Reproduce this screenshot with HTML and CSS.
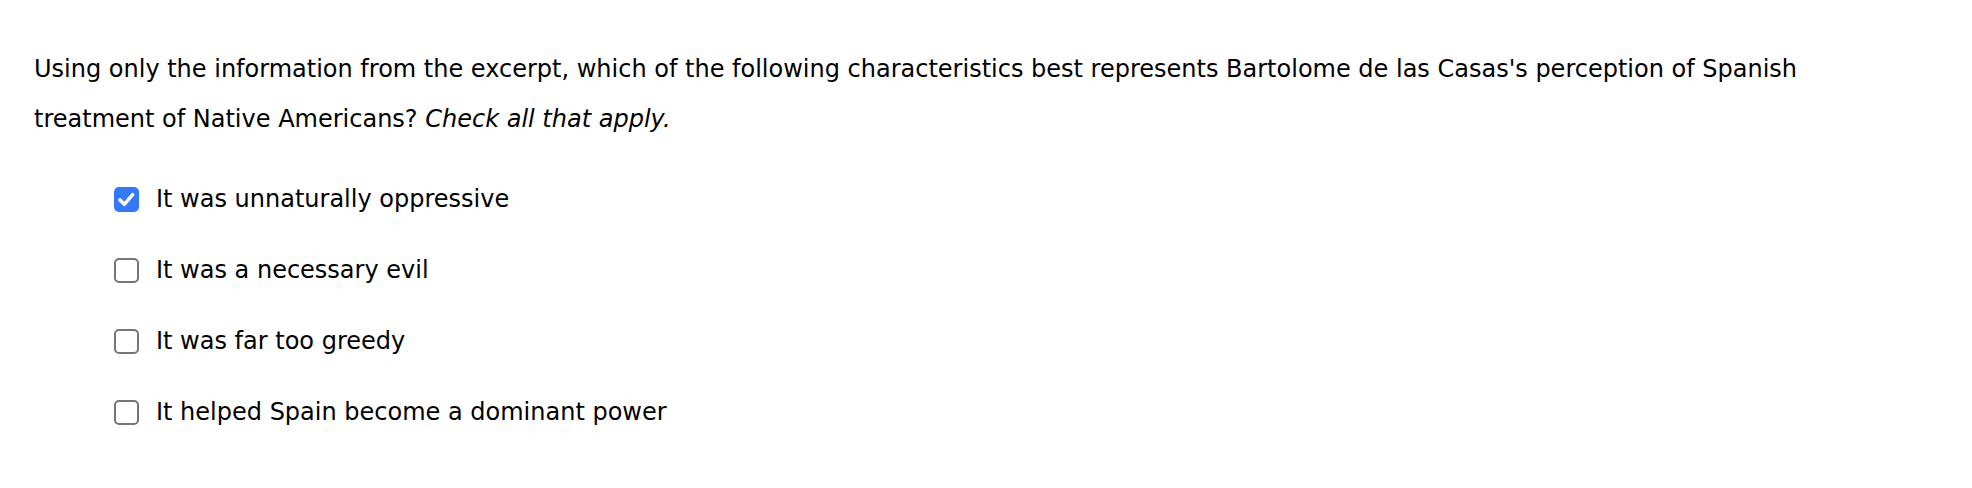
FILE: index.html
```html
<!DOCTYPE html>
<html lang="en">
<head>
<meta charset="utf-8">
<title>Question</title>
<link rel="stylesheet" href="styles.css">
</head>
<body>
<main class="question">
  <p class="prompt">Using only the information from the excerpt, which of the following characteristics best represents Bartolome de las Casas's perception of Spanish treatment of Native Americans? <em>Check all that apply.</em></p>
  <ul class="options">
    <li class="option"><span class="box checked"><svg viewBox="0 0 24 24" width="24" height="24"><path d="M4.5 12.5 L9.5 17.5 L19 6.5" fill="none" stroke="#fff" stroke-width="4" stroke-linecap="round" stroke-linejoin="round"/></svg></span><span class="label">It was unnaturally oppressive</span></li>
    <li class="option"><span class="box"></span><span class="label">It was a necessary evil</span></li>
    <li class="option"><span class="box"></span><span class="label">It was far too greedy</span></li>
    <li class="option"><span class="box"></span><span class="label">It helped Spain become a dominant power</span></li>
  </ul>
</main>
</body>
</html>
```
FILE: styles.css
```css
html, body {
  margin: 0;
  padding: 0;
  background: #fff;
}
body {
  font-family: Verdana, "DejaVu Sans", sans-serif;
  font-size: 24px;
  color: #000;
}
.question {
  padding: 44px 0 0 34px;
  width: 1820px;
}
.prompt {
  margin: 0;
  line-height: 50px;
}
.prompt em {
  font-style: italic;
}
.options {
  list-style: none;
  margin: 42px 0 0 0;
  padding: 0 0 0 80px;
  display: flex;
  flex-direction: column;
  gap: 45px;
}
.option {
  display: flex;
  align-items: center;
  gap: 17px;
  height: 26px;
}
.box {
  box-sizing: border-box;
  width: 25px;
  height: 25px;
  border: 2px solid #767676;
  border-radius: 5px;
  background: #fff;
  display: flex;
  align-items: center;
  justify-content: center;
  flex: none;
}
.box.checked {
  background: #3478f6;
  border-color: #3478f6;
}
.box svg {
  display: block;
  width: 21px;
  height: 21px;
}
.label {
  line-height: 26px;
}
```
